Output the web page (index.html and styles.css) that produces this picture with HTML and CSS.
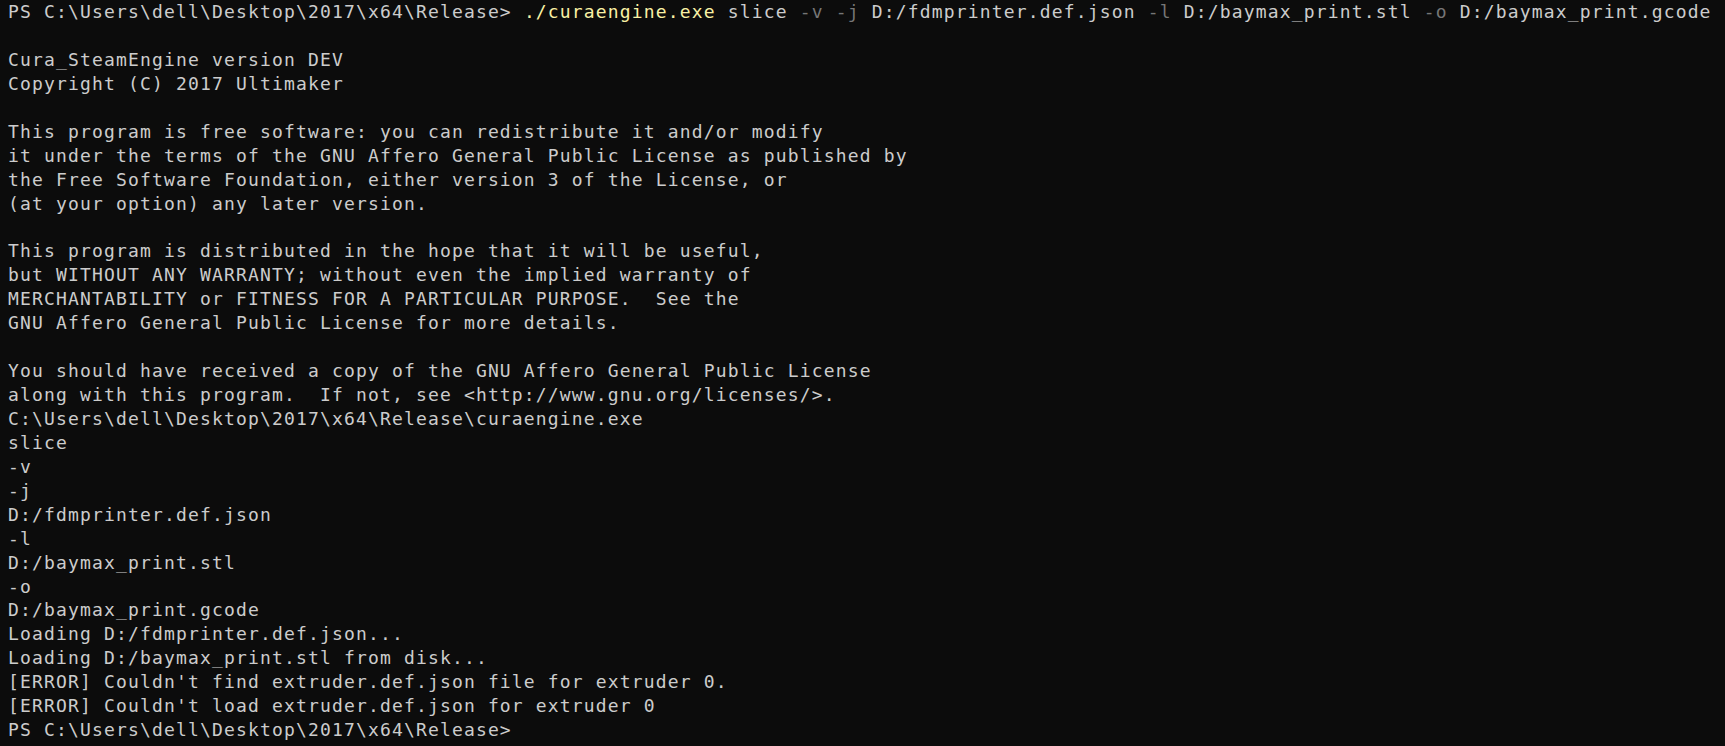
FILE: index.html
```html
<!DOCTYPE html>
<html>
  <head>
    <title>Windows PowerShell</title>
    <meta charset="UTF-8">
    <meta name="viewport" content="width=device-width, initial-scale=1.0">
    <link rel="stylesheet" href="styles.css">
  </head>
  <body>
    <pre id="terminal"><span class="prompt">PS C:\Users\dell\Desktop\2017\x64\Release&gt; </span><span class="command">./curaengine.exe</span> slice <span class="param">-v</span> <span class="param">-j</span> D:/fdmprinter.def.json <span class="param">-l</span> D:/baymax_print.stl <span class="param">-o</span> D:/baymax_print.gcode

Cura_SteamEngine version DEV
Copyright (C) 2017 Ultimaker

This program is free software: you can redistribute it and/or modify
it under the terms of the GNU Affero General Public License as published by
the Free Software Foundation, either version 3 of the License, or
(at your option) any later version.

This program is distributed in the hope that it will be useful,
but WITHOUT ANY WARRANTY; without even the implied warranty of
MERCHANTABILITY or FITNESS FOR A PARTICULAR PURPOSE.  See the
GNU Affero General Public License for more details.

You should have received a copy of the GNU Affero General Public License
along with this program.  If not, see &lt;http://www.gnu.org/licenses/&gt;.
C:\Users\dell\Desktop\2017\x64\Release\curaengine.exe
slice
-v
-j
D:/fdmprinter.def.json
-l
D:/baymax_print.stl
-o
D:/baymax_print.gcode
Loading D:/fdmprinter.def.json...
Loading D:/baymax_print.stl from disk...
[ERROR] Couldn't find extruder.def.json file for extruder 0.
[ERROR] Couldn't load extruder.def.json for extruder 0
PS C:\Users\dell\Desktop\2017\x64\Release&gt;</pre>
  </body>
</html>
```

FILE: styles.css
```css
* {
  box-sizing: border-box;
}

html, body {
  height: 100%;
  margin: 0;
  background-color: #0c0c0c;
  overflow: hidden;
}

#terminal {
  margin: 0;
  padding: 0 8px;
  font-family: "DejaVu Sans Mono", monospace;
  font-size: 18px;
  letter-spacing: 1.16px;
  line-height: 23.93px;
  color: #cccccc;
  white-space: pre;
}

.command {
  color: #f9f1a5;
}

.param {
  color: #767676;
}
```
